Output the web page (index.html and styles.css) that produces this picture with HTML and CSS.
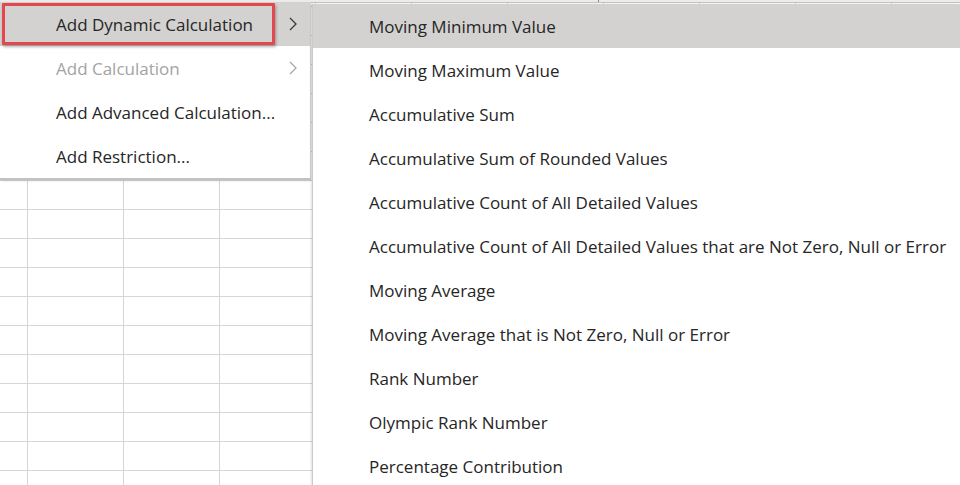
FILE: index.html
```html
<!DOCTYPE html>
<html lang="en">
<head>
<meta charset="utf-8">
<title>Dynamic Calculation menu</title>
<link rel="stylesheet" href="styles.css">
</head>
<body>
<div class="sheet">
  <div class="sheet-header">
    <div class="header-cell header-cell-wide"></div>
    <div class="header-cell"></div>
  </div>
  <div class="sheet-grid"></div>
</div>

<ul class="menu menu-main">
  <li class="menu-item is-active">
    <span class="menu-label">Add Dynamic Calculation</span>
    <svg class="chevron" width="8" height="14" viewBox="0 0 8 14"><polyline points="1,1 7,7 1,13"/></svg>
  </li>
  <li class="menu-item is-disabled">
    <span class="menu-label">Add Calculation</span>
    <svg class="chevron" width="8" height="14" viewBox="0 0 8 14"><polyline points="1,1 7,7 1,13"/></svg>
  </li>
  <li class="menu-item"><span class="menu-label">Add Advanced Calculation...</span></li>
  <li class="menu-item"><span class="menu-label">Add Restriction...</span></li>
</ul>
<div class="callout"></div>

<ul class="menu menu-sub">
  <li class="menu-item is-active"><span class="menu-label">Moving Minimum Value</span></li>
  <li class="menu-item"><span class="menu-label">Moving Maximum Value</span></li>
  <li class="menu-item"><span class="menu-label">Accumulative Sum</span></li>
  <li class="menu-item"><span class="menu-label">Accumulative Sum of Rounded Values</span></li>
  <li class="menu-item"><span class="menu-label">Accumulative Count of All Detailed Values</span></li>
  <li class="menu-item"><span class="menu-label">Accumulative Count of All Detailed Values that are Not Zero, Null or Error</span></li>
  <li class="menu-item"><span class="menu-label">Moving Average</span></li>
  <li class="menu-item"><span class="menu-label">Moving Average that is Not Zero, Null or Error</span></li>
  <li class="menu-item"><span class="menu-label">Rank Number</span></li>
  <li class="menu-item"><span class="menu-label">Olympic Rank Number</span></li>
  <li class="menu-item"><span class="menu-label">Percentage Contribution</span></li>
</ul>
</body>
</html>
```

FILE: styles.css
```css
html, body {
  margin: 0;
  padding: 0;
}

body {
  position: relative;
  width: 960px;
  height: 485px;
  overflow: hidden;
  background: #ffffff;
  font-family: "Open Sans", "Noto Sans", sans-serif;
  color: #262626;
}

/* Spreadsheet behind the context menus */
.sheet {
  display: flex;
  flex-direction: column;
  height: 100%;
}

.sheet-header {
  display: flex;
  height: 2px;
  background: #ebebeb;
  border-bottom: 1px solid #c4c4c4;
}

.header-cell {
  flex: 1;
}

.header-cell-wide {
  flex: 0 0 599px;
  box-sizing: border-box;
  border-right: 1px solid #8c8c8c;
}

.sheet-grid {
  flex: 1;
  background-image:
    linear-gradient(to right, #d6d6d6 1px, transparent 1px),
    linear-gradient(to bottom, #d6d6d6 1px, transparent 1px);
  background-size: 96px 100%, 100% 29px;
  background-position: 27px 0, 0 3px;
}

/* Context menus */
.menu {
  position: absolute;
  margin: 0;
  padding: 0;
  list-style: none;
  background: #ffffff;
}

.menu-main {
  left: 0;
  top: 2px;
  width: 310px;
  border-right: 1px solid #d2d2d2;
  border-bottom: 2px solid #c2c2c2;
  box-shadow: 1px 1px 2px rgba(0, 0, 0, 0.12);
}

.menu-sub {
  left: 312px;
  top: 4px;
  right: 0;
  border-left: 1px solid #cacaca;
  box-shadow: -1px 0 2px rgba(0, 0, 0, 0.12);
}

.menu-item {
  display: flex;
  align-items: center;
  height: 44px;
  padding-left: 56px;
  font-size: 17px;
  white-space: nowrap;
}

.menu-item.is-active {
  background: #d3d2d0;
}

.menu-item.is-disabled {
  color: #a3a3a3;
}

.chevron {
  margin-left: auto;
  margin-right: 13px;
  fill: none;
  stroke: #3a3a3a;
  stroke-width: 1.3;
}

.is-disabled .chevron {
  stroke: #a8a8a8;
}

/* Red highlight drawn around the active entry */
.callout {
  position: absolute;
  left: 2px;
  top: 3px;
  width: 273px;
  height: 42px;
  box-sizing: border-box;
  border: 3px solid #e2484d;
  border-radius: 1px;
  box-shadow: 1px 2px 3px rgba(0, 0, 0, 0.3);
}
```
